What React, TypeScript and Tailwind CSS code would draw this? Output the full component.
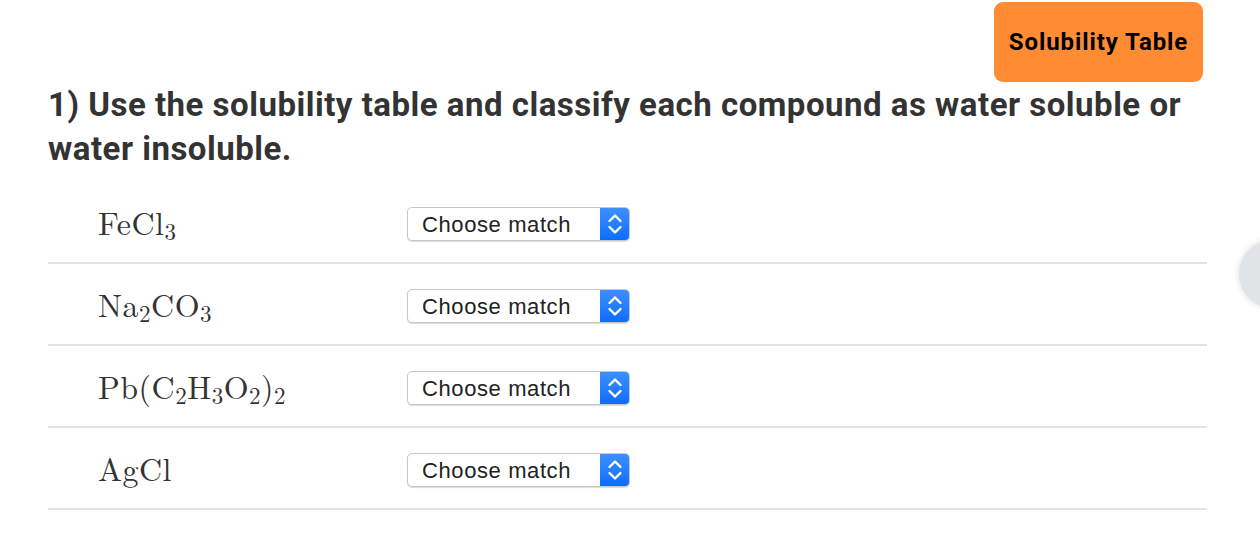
import React from "react";

const Sub = ({ children }: { children: React.ReactNode }) => (
  <sub className="relative top-[0.2em] align-baseline text-[0.72em]">{children}</sub>
);

const rows: React.ReactNode[] = [
  <>FeCl<Sub>3</Sub></>,
  <>Na<Sub>2</Sub>CO<Sub>3</Sub></>,
  <>Pb(C<Sub>2</Sub>H<Sub>3</Sub>O<Sub>2</Sub>)<Sub>2</Sub></>,
  <>AgCl</>,
];

function Select() {
  return (
    <div className="flex h-[34px] w-[223px] items-stretch overflow-hidden rounded-[5px] border border-[#c8c8c8] bg-white shadow-[0_1px_1px_rgba(0,0,0,0.15)]">
      <div
        className="flex flex-1 items-center pl-[14px] text-[22px] tracking-[0.6px] text-[#222]"
        style={{ fontFamily: "'Helvetica Neue', 'Liberation Sans', Arial, sans-serif" }}
      >
        Choose match
      </div>
      <div className="flex w-[29px] items-center justify-center bg-gradient-to-b from-[#3d8ffe] to-[#0a6cff]">
        <svg width="16" height="22" viewBox="0 0 16 22" fill="none" stroke="white" strokeWidth="2.4" strokeLinecap="round" strokeLinejoin="round">
          <path d="M2.5 8 L8 2.5 L13.5 8" />
          <path d="M2.5 14 L8 19.5 L13.5 14" />
        </svg>
      </div>
    </div>
  );
}

export default function App() {
  return (
    <div className="relative h-[558px] w-[1260px] overflow-hidden bg-white" style={{ fontFamily: "Roboto, 'Liberation Sans', sans-serif" }}>
      <div className="absolute left-[1239px] top-[240px] h-[68px] w-[68px] rounded-full bg-[#e1e4e6] shadow-[0_0_6px_rgba(0,0,0,0.15)]" />
      <div className="flex justify-end pr-[57px] pt-[2px]">
        <button className="flex h-[80px] w-[209px] items-center justify-center rounded-[9px] bg-[#ff8c33] text-[24px] font-bold tracking-[0.9px] text-black">
          Solubility Table
        </button>
      </div>
      <div className="pl-[48px] pr-[53px]">
        <h1 className="mt-[1px] text-[33px] font-bold leading-[44px] tracking-[0.5px] text-[#333]">
          1) Use the solubility table and classify each compound as water soluble or water insoluble.
        </h1>
        <div className="mt-[11px]">
          {rows.map((r, i) => (
            <div key={i} className="flex h-[82px] items-start border-b-2 border-[#e3e3e3] pt-[25px]">
              <div
                className="relative -top-[2px] w-[359px] pl-[50px] text-[32px] leading-[34px] tracking-[0.5px] text-[#333]"
                style={{ fontFamily: "'Latin Modern Roman', 'Liberation Serif', serif" }}
              >
                {r}
              </div>
              <Select />
            </div>
          ))}
        </div>
      </div>
    </div>
  );
}
